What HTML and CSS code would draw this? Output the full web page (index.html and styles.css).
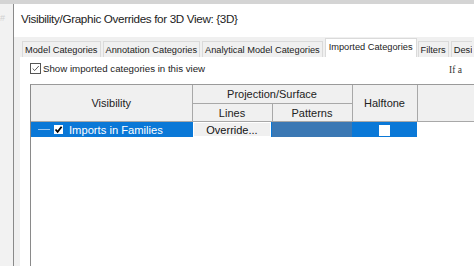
FILE: index.html
```html
<!DOCTYPE html>
<html>
<head>
<meta charset="utf-8">
<link rel="stylesheet" href="styles.css">
</head>
<body>
<div class="desk">
  <div class="topbar"></div>
  <div class="main">
    <div class="gutter"><span class="hash">#</span></div>
    <div class="dialog">
      <div class="title">Visibility/Graphic Overrides for 3D View: {3D}</div>
      <div class="body">
        <div class="tabs">
          <div class="tab">Model Categories</div>
          <div class="tab">Annotation Categories</div>
          <div class="tab">Analytical Model Categories</div>
          <div class="tab active">Imported Categories</div>
          <div class="tab">Filters</div>
          <div class="tab last">Desi</div>
        </div>
        <div class="page">
          <div class="opts">
            <label class="show"><span class="cb"><svg viewBox="0 0 11 11" width="11" height="11"><path d="M2 5.5 L4.5 8 L9.5 2.5" fill="none" stroke="#333" stroke-width="1"/></svg></span>Show imported categories in this view</label>
            <span class="note">If a</span>
          </div>
          <div class="gridbox">
            <table class="grid">
              <colgroup>
                <col class="c-vis"><col class="c-lines"><col class="c-pat"><col class="c-half"><col class="c-more">
              </colgroup>
              <thead>
                <tr class="h1">
                  <th rowspan="2">Visibility</th>
                  <th colspan="2">Projection/Surface</th>
                  <th rowspan="2">Halftone</th>
                  <th rowspan="2"></th>
                </tr>
                <tr class="h2">
                  <th>Lines</th>
                  <th>Patterns</th>
                </tr>
              </thead>
              <tbody>
                <tr class="sel">
                  <td class="vis"><span class="dash"></span><span class="rcb"><svg viewBox="0 0 9 9" width="9" height="9"><path d="M1.5 4.5 L3.6 6.8 L7.6 1.8" fill="none" stroke="#000" stroke-width="1.8"/></svg></span><span class="name">Imports in Families</span></td>
                  <td class="lines"><span class="ovr">Override...</span></td>
                  <td class="pat"></td>
                  <td class="half"><span class="hcb"></span></td>
                  <td class="more"></td>
                </tr>
              </tbody>
            </table>
          </div>
        </div>
      </div>
    </div>
  </div>
</div>
</body>
</html>
```

FILE: styles.css
```css
html, body {
  margin: 0;
  padding: 0;
  width: 474px;
  height: 266px;
  overflow: hidden;
}
body {
  font-family: "Liberation Sans", Arial, sans-serif;
  color: #1e1e1e;
  background: #f0f0f0;
}
.desk {
  display: flex;
  flex-direction: column;
  height: 266px;
}
.topbar {
  height: 4px;
  background: #d4d4d4;
  flex: none;
}
.main {
  display: flex;
  flex: 1;
  min-height: 0;
}
.gutter {
  width: 13px;
  flex: none;
  background: #f2f2f2;
  overflow: hidden;
}
.hash {
  display: block;
  margin-top: 9px;
  font-size: 9px;
  color: #d0d0d0;
}
.dialog {
  flex: 1;
  min-width: 0;
  border-left: 1px solid #8a8a8a;
  background: #fff;
  display: flex;
  flex-direction: column;
}
.title {
  height: 33px;
  flex: none;
  padding-left: 7px;
  padding-top: 8px;
  box-sizing: border-box;
  font-family: "Liberation Sans", Arial, sans-serif;
  font-size: 11.7px;
  letter-spacing: -0.35px;
  color: #222;
  white-space: nowrap;
}
.body {
  flex: 1;
  min-height: 0;
  background: #f0f0f0;
  padding-left: 6px;
  display: flex;
  flex-direction: column;
}
.tabs {
  display: flex;
  align-items: flex-end;
  height: 19px;
  flex: none;
  padding-left: 2px;
  padding-top: 1px;
  white-space: nowrap;
  font-size: 9.25px;
  color: #222;
  overflow: hidden;
}
.tab {
  height: 16px;
  line-height: 16px;
  padding: 0 2px;
  border: 1px solid #dadada;
  border-bottom: none;
  background: #f0f0f0;
  margin-right: 2px;
  box-sizing: border-box;
  flex: none;
}
.tab.active {
  height: 19px;
  line-height: 16px;
  background: #fff;
  margin-right: 1px;
  padding: 0 3px;
}
.tab.last {
  border-right: none;
  flex: 1 1 auto;
  min-width: 0;
  overflow: hidden;
}
.page {
  flex: 1;
  min-height: 0;
  background: #fff;
  padding-left: 10px;
  display: flex;
  flex-direction: column;
  overflow: hidden;
}
.opts {
  height: 27px;
  flex: none;
  display: flex;
  align-items: flex-start;
  padding-top: 6px;
  box-sizing: border-box;
  white-space: nowrap;
}
.show {
  display: flex;
  align-items: center;
  font-size: 9.7px;
  color: #222;
}
.cb {
  width: 11px;
  height: 11px;
  border: 1px solid #555;
  box-sizing: border-box;
  margin-right: 2px;
  display: flex;
  align-items: center;
  justify-content: center;
  background: #fff;
}
.cb svg { display: block; }
.note {
  margin-left: auto;
  margin-top: 2px;
  margin-right: 12px;
  font-family: "Liberation Serif", serif;
  font-size: 9.5px;
  color: #333;
}
.gridbox {
  flex: 1;
  border-top: 1px solid #9a9a9a;
  border-left: 1px solid #8a8a8a;
  overflow: hidden;
}
.grid {
  border-collapse: collapse;
  table-layout: fixed;
  width: 520px;
  font-size: 11px;
}
.c-vis { width: 161px; }
.c-lines { width: 80px; }
.c-pat { width: 80px; }
.c-half { width: 65px; }
.c-more { width: 134px; }
.grid th {
  background: #f0f0f0;
  font-weight: normal;
  color: #222;
  border: 1px solid #a8a8a8;
  border-top: none;
  padding: 0;
  text-align: center;
  white-space: nowrap;
}
.grid tr th:first-child { border-left: none; }
.h1 th { height: 18px; }
.h2 th { height: 17px; }
.grid td {
  padding: 0;
  height: 15px;
  border: none;
}
.sel .vis {
  background: #0a78d7;
  color: #fff;
  white-space: nowrap;
  display: flex;
  align-items: center;
  height: 15px;
}
.dash {
  width: 12px;
  height: 1px;
  background: #9cc6ee;
  margin-left: 7px;
  margin-right: 4px;
}
.rcb {
  width: 9px;
  height: 9px;
  background: #fff;
  display: flex;
  align-items: center;
  justify-content: center;
  margin-right: 6px;
}
.rcb svg { display: block; }
.name { font-size: 11.2px; }
.lines {
  background: #0a78d7;
  padding: 0 1px !important;
}
.ovr {
  display: block;
  height: 15px;
  line-height: 14px;
  background: #f0f0f0;
  border: 1px solid #fff;
  box-sizing: border-box;
  text-align: center;
  color: #111;
  font-size: 11px;
}
.pat { background: #3b78b4; }
.half {
  background: #0a78d7;
  text-align: center;
}
.hcb {
  display: inline-block;
  width: 11px;
  height: 11px;
  background: #fff;
  vertical-align: middle;
}
.more { background: #fff; }
```
